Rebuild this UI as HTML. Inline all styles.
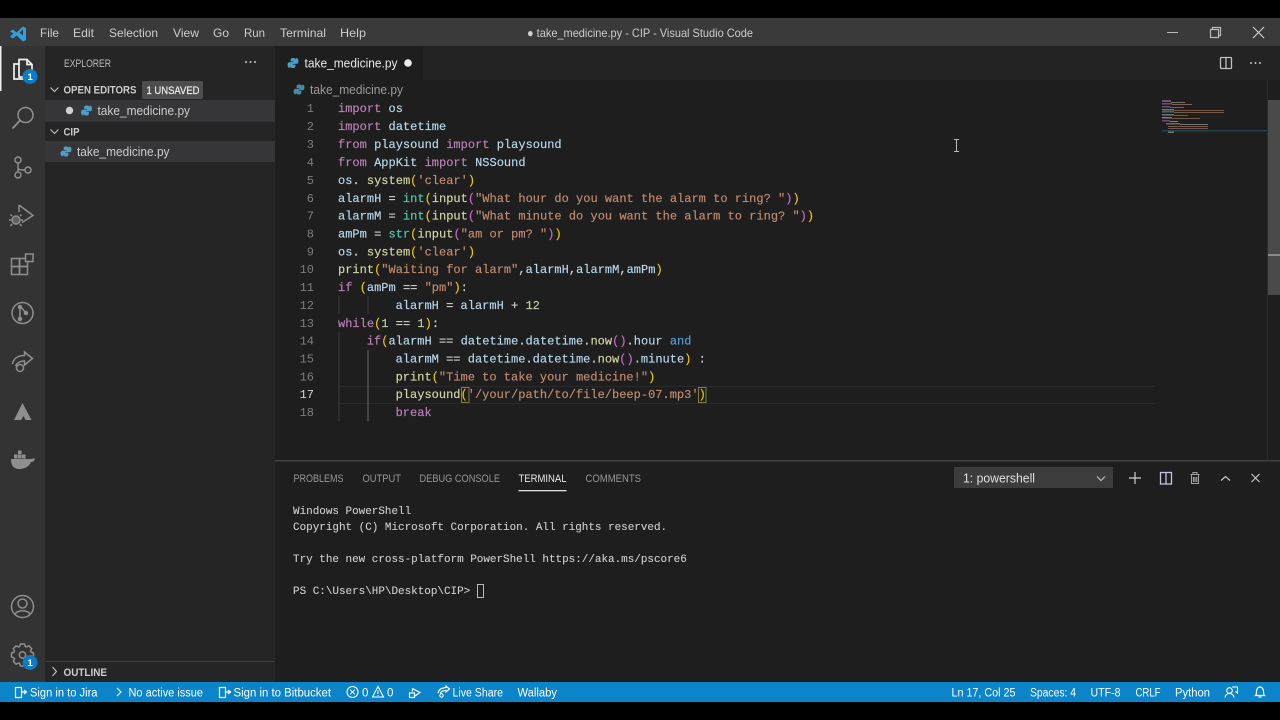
<!DOCTYPE html>
<html><head><meta charset="utf-8"><title>take_medicine.py - CIP - Visual Studio Code</title>
<style>
html,body{margin:0;padding:0;background:#000;width:1280px;height:720px;overflow:hidden}
svg{display:block;filter:blur(.3px)}
text{font-family:"Liberation Sans",sans-serif;font-size:12px;white-space:pre}
.c{font-family:"Liberation Mono",monospace;font-size:12px;letter-spacing:.012px;stroke-width:.18px}
.t{font-family:"Liberation Mono",monospace;font-size:10.94px;fill:#cccccc;stroke:#cccccc;stroke-width:.12px}
.n{font-family:"Liberation Mono",monospace;font-size:12px;fill:#7d7d7d;text-anchor:end}
.k{fill:#bb80b6;stroke:#bb80b6}.v{fill:#b4d6ea;stroke:#b4d6ea}.f{fill:#d3d3a6;stroke:#d3d3a6}.g{fill:#4ec9b0;stroke:#4ec9b0}.s{fill:#c08a6e;stroke:#c08a6e}.m{fill:#b5cea8;stroke:#b5cea8}.w{fill:#d0d0d0;stroke:#d0d0d0}.y{fill:#e8c610;stroke:#e8c610}.p{fill:#c96ac6;stroke:#c96ac6}.b{fill:#3b9ee0}.a{fill:#569cd6;stroke:#569cd6}
.i{fill:none;stroke:#8f8f8f;stroke-width:1.5}
.s1{fill:#fff;font-size:11.5px}
</style></head><body>
<svg width="1280" height="720" viewBox="0 0 1280 720" xmlns="http://www.w3.org/2000/svg">
<rect width="1280" height="720" fill="#000"/>
<rect y="18" width="1280" height="28" fill="#3a3a3a"/>
<rect y="46" width="45" height="636" fill="#333333"/>
<rect x="45" y="46" width="230" height="636" fill="#252526"/>
<rect x="275" y="46" width="1005" height="636" fill="#1e1e1e"/>
<rect x="275" y="46" width="1005" height="34" fill="#232323"/>
<rect x="275" y="46" width="148" height="34" fill="#1e1e1e"/>
<rect x="275" y="460" width="1005" height="1.500" fill="#414141"/>
<rect y="682" width="1280" height="20" fill="#0c84c9"/>

<!-- title bar -->
<path d="M10 31.500l3-2 3.500 3 6.500-6 3 1.500v12l-3 1.500-6.500-6-3.500 3-3-2 3.500-3z" fill="#2f9fe0"/>
<path d="M19.500 32.500l3.500-3v6z" fill="#3a3a3a"/>
<g fill="#cccccc">
<text x="40" y="37" textLength="19" lengthAdjust="spacingAndGlyphs">File</text>
<text x="73" y="37" textLength="21" lengthAdjust="spacingAndGlyphs">Edit</text>
<text x="109" y="37" textLength="49" lengthAdjust="spacingAndGlyphs">Selection</text>
<text x="173" y="37" textLength="26" lengthAdjust="spacingAndGlyphs">View</text>
<text x="213" y="37" textLength="16" lengthAdjust="spacingAndGlyphs">Go</text>
<text x="244" y="37" textLength="21" lengthAdjust="spacingAndGlyphs">Run</text>
<text x="280" y="37" textLength="46" lengthAdjust="spacingAndGlyphs">Terminal</text>
<text x="340" y="37" textLength="26" lengthAdjust="spacingAndGlyphs">Help</text>
<text x="527" y="37" textLength="226" lengthAdjust="spacingAndGlyphs">● take_medicine.py - CIP - Visual Studio Code</text>
</g>
<path d="M1167 32.500h11" stroke="#bbb" stroke-width="1" fill="none"/>
<path d="M1210.500 29.500h8v8h-8zM1212.500 29.500v-2h8v8h-2" stroke="#bbb" stroke-width="1.200" fill="none"/>
<path d="M1253 27l11 11M1264 27l-11 11" stroke="#ccc" stroke-width="1.200" fill="none"/>

<!-- activity bar -->
<rect x="0" y="46" width="1.500" height="45" fill="#eee"/>
<g fill="none" stroke="#f0f0f0" stroke-width="1.700">
<path d="M19 59.500h8l5 5v12.500H19z"/><path d="M19 64h-5v15h11v-2"/><path d="M27 59.500v5h5"/>
</g>
<circle cx="30" cy="76.500" r="7.500" fill="#0e7cc4"/>
<text x="27.500" y="80" style="font-size:9.500px;font-weight:bold" fill="#fff">1</text>
<g class="i">
<circle cx="25.500" cy="115" r="7.500"/><path d="M20 120.500l-7.500 8" stroke-width="1.900"/>
<circle cx="18" cy="160" r="3"/><circle cx="28" cy="170" r="3"/><circle cx="18" cy="175" r="3"/>
<path d="M18 163v9M18 168q0 2 7 2"/>
<path d="M19 205l14 10.500-11 7"/><path d="M19 205v7"/>
<circle cx="16" cy="220" r="4" fill="#8f8f8f" fill-opacity=".5"/><path d="M12 216l-1.500-1.500M20 216l1.500-1.500M11 220H9M21 220h2M12 224l-1.500 2M20 224l1.500 2"/>
<rect x="11.500" y="258.500" width="8" height="8"/><rect x="19.500" y="258.500" width="8" height="8"/><rect x="11.500" y="266.500" width="8" height="8"/><rect x="19.500" y="266.500" width="8" height="8"/><rect x="25.500" y="254" width="7.500" height="7.500" fill="#333"/>
<circle cx="22.500" cy="313" r="10.500"/><path d="M20 306v14M20 306l6 7"/><circle cx="20" cy="307" r="1.500" fill="#8f8f8f"/><circle cx="20" cy="319" r="1.500" fill="#8f8f8f"/><circle cx="26" cy="313" r="1.500" fill="#8f8f8f"/>
<circle cx="20" cy="368" r="3.500"/><path d="M12.500 364c1-6 6-8.500 12-8.500v-3.500l8 6.500-8 6.500v-4c-4 0-7 1-9 5"/>
</g>
<path d="M22.500 403L14 420H21L23.500 416L25.500 420H31.500Z" fill="#8f8f8f"/>
<path d="M11 459h21c1-1 2-1 3 0-1 2-2 3-4 3-2 5-7 7-12 7-5 0-8-3-8-10z" fill="#8f8f8f"/>
<rect x="14" y="454.500" width="3.600" height="4" fill="#8f8f8f"/><rect x="18" y="454.500" width="3.600" height="4" fill="#8f8f8f"/><rect x="22" y="454.500" width="3.600" height="4" fill="#8f8f8f"/><rect x="18" y="450.500" width="3.600" height="3.600" fill="#8f8f8f"/>
<g class="i">
<circle cx="22.500" cy="606.500" r="11"/><circle cx="22.500" cy="603.500" r="4.500"/><path d="M15 614.500c1.500-5 13.500-5 15 0"/>
</g>
<g class="i" transform="translate(22.500 655)">
<circle r="3.200"/>
<path id="tooth" d="M-3-8.200L-2-11H2L3-8.200L3.680-7.920"/>
<use href="#tooth" transform="rotate(45)"/><use href="#tooth" transform="rotate(90)"/><use href="#tooth" transform="rotate(135)"/><use href="#tooth" transform="rotate(180)"/><use href="#tooth" transform="rotate(225)"/><use href="#tooth" transform="rotate(270)"/><use href="#tooth" transform="rotate(315)"/>
</g>
<circle cx="30" cy="662.500" r="7.500" fill="#0e7cc4"/>
<text x="27.500" y="666" style="font-size:9.500px;font-weight:bold" fill="#fff">1</text>

<!-- sidebar -->
<text x="64" y="67" style="font-size:11px" fill="#bbbbbb" textLength="47" lengthAdjust="spacingAndGlyphs">EXPLORER</text>
<g fill="#c4c4c4"><circle cx="246" cy="62" r="1"/><circle cx="250.500" cy="62" r="1"/><circle cx="255" cy="62" r="1"/></g>
<path d="M50.500 87.500l4 4 4-4" fill="none" stroke="#c4c4c4" stroke-width="1.100"/>
<text x="63.500" y="93.500" style="font-size:11px;font-weight:bold" fill="#cccccc" textLength="73" lengthAdjust="spacingAndGlyphs">OPEN EDITORS</text>
<rect x="142" y="81" width="61" height="18" rx="2" fill="#4d4d4d"/>
<text x="146.500" y="94" style="font-size:11px" fill="#eeeeee" stroke="#eeeeee" stroke-width=".2" textLength="53" lengthAdjust="spacingAndGlyphs">1 UNSAVED</text>
<rect x="45" y="100" width="230" height="21" fill="#363639"/>
<circle cx="69.500" cy="110.500" r="3.700" fill="#d0d0d0"/>
<g id="py" transform="translate(86.500 110.500) scale(.8 1) translate(-86.500 -110.500)"><path d="M86.500 105.500c-2.500 0-3 1-3 2.500v1h3.500v.7h-5c-1.500 0-2.300 1-2.300 2.800s.8 2.800 2.200 2.800h1.100v-1.700c0-1.300 1-2.200 2.300-2.200h3c1 0 1.900-.9 1.900-2v-1.400c0-1.600-1.300-2.500-3.700-2.500z" fill="#4f9ec4"/><path d="M86.500 115.500c2.500 0 3-1 3-2.500v-1H86v-.7h5c1.500 0 2.300-1 2.300-2.800s-.8-2.800-2.200-2.800H90v1.700c0 1.300-1 2.200-2.300 2.200h-3c-1 0-1.900.9-1.900 2v1.400c0 1.600 1.300 2.500 3.700 2.500z" fill="#4f9ec4"/></g>
<text x="97.500" y="115" fill="#cccccc" style="font-size:13px" textLength="92.500" lengthAdjust="spacingAndGlyphs">take_medicine.py</text>
<rect x="45" y="120.500" width="230" height="1" fill="#3c3c3c"/>
<path d="M50.500 129.500l4 4 4-4" fill="none" stroke="#c4c4c4" stroke-width="1.100"/>
<text x="63.500" y="135.500" style="font-size:11px;font-weight:bold" fill="#cccccc" textLength="16" lengthAdjust="spacingAndGlyphs">CIP</text>
<rect x="45" y="141" width="230" height="21" fill="#363639"/>
<use href="#py" x="-20.500" y="41"/>
<text x="77" y="156" fill="#cccccc" style="font-size:13px" textLength="92.500" lengthAdjust="spacingAndGlyphs">take_medicine.py</text>
<rect x="45" y="661" width="230" height="1" fill="#3f3f3f"/>
<path d="M52.500 667l4 4.500-4 4.500" fill="none" stroke="#c4c4c4" stroke-width="1.100"/>
<text x="63.500" y="676" style="font-size:11px;font-weight:bold" fill="#cccccc" textLength="43.500" lengthAdjust="spacingAndGlyphs">OUTLINE</text>

<!-- tab -->
<use href="#py" x="206.500" y="-47.500"/>
<text x="304.500" y="67.500" fill="#e8e8e8" style="font-size:13px" textLength="93" lengthAdjust="spacingAndGlyphs">take_medicine.py</text>
<circle cx="408" cy="63" r="3.800" fill="#eeeeee"/>
<rect x="1220.500" y="57.500" width="11" height="11" rx="1" fill="none" stroke="#c0c0c0" stroke-width="1.300"/>
<path d="M1226 57.500v11" stroke="#c0c0c0" stroke-width="1.300"/>
<g fill="#c4c4c4"><circle cx="1251" cy="63" r="1"/><circle cx="1255.500" cy="63" r="1"/><circle cx="1260" cy="63" r="1"/></g>
<use href="#py" x="212.500" y="-21" opacity=".85"/>
<text x="310" y="94" fill="#9a9a9a" style="font-size:12.500px" textLength="93" lengthAdjust="spacingAndGlyphs">take_medicine.py</text>

<!-- current line + guides -->
<path d="M338 386.500H1155M338 403.500H1155" stroke="#2a2a2a" stroke-width="1"/>
<path d="M339 296v18M368 296v18M339 332v89" stroke="#3c3c3c" stroke-width="1"/>
<path d="M368 350v71" stroke="#6a6a6a" stroke-width="1"/>
<rect x="461.500" y="387.500" width="7.500" height="15" fill="#1e1e1e" stroke="#808040" stroke-width="1"/>
<rect x="698.500" y="387.500" width="7.500" height="15" fill="#1e1e1e" stroke="#808040" stroke-width="1"/>

<!-- line numbers -->
<text class="n" x="314" y="112">1</text>
<text class="n" x="314" y="130">2</text>
<text class="n" x="314" y="148">3</text>
<text class="n" x="314" y="166">4</text>
<text class="n" x="314" y="184">5</text>
<text class="n" x="314" y="202">6</text>
<text class="n" x="314" y="219.500">7</text>
<text class="n" x="314" y="237.500">8</text>
<text class="n" x="314" y="255.500">9</text>
<text class="n" x="314" y="273">10</text>
<text class="n" x="314" y="291">11</text>
<text class="n" x="314" y="309">12</text>
<text class="n" x="314" y="327">13</text>
<text class="n" x="314" y="344.500">14</text>
<text class="n" x="314" y="362.500">15</text>
<text class="n" x="314" y="380.500">16</text>
<text class="n" x="314" y="398" style="fill:#d0d0d0">17</text>
<text class="n" x="314" y="416">18</text>

<!-- code -->
<g>
<text class="c" x="338" y="112"><tspan class="k">import</tspan><tspan class="w"> </tspan><tspan class="v">os</tspan></text>
<text class="c" x="338" y="130"><tspan class="k">import</tspan><tspan class="w"> </tspan><tspan class="v">datetime</tspan></text>
<text class="c" x="338" y="148"><tspan class="k">from</tspan><tspan class="w"> </tspan><tspan class="v">playsound</tspan><tspan class="w"> </tspan><tspan class="k">import</tspan><tspan class="w"> </tspan><tspan class="v">playsound</tspan></text>
<text class="c" x="338" y="166"><tspan class="k">from</tspan><tspan class="w"> </tspan><tspan class="v">AppKit</tspan><tspan class="w"> </tspan><tspan class="k">import</tspan><tspan class="w"> </tspan><tspan class="v">NSSound</tspan></text>
<text class="c" x="338" y="184"><tspan class="v">os</tspan><tspan class="w">. </tspan><tspan class="f">system</tspan><tspan class="y">(</tspan><tspan class="s">'clear'</tspan><tspan class="y">)</tspan></text>
<text class="c" x="338" y="202"><tspan class="v">alarmH</tspan><tspan class="w"> = </tspan><tspan class="g">int</tspan><tspan class="y">(</tspan><tspan class="f">input</tspan><tspan class="p">(</tspan><tspan class="s">"What hour do you want the alarm to ring? "</tspan><tspan class="p">)</tspan><tspan class="y">)</tspan></text>
<text class="c" x="338" y="219.500"><tspan class="v">alarmM</tspan><tspan class="w"> = </tspan><tspan class="g">int</tspan><tspan class="y">(</tspan><tspan class="f">input</tspan><tspan class="p">(</tspan><tspan class="s">"What minute do you want the alarm to ring? "</tspan><tspan class="p">)</tspan><tspan class="y">)</tspan></text>
<text class="c" x="338" y="237.500"><tspan class="v">amPm</tspan><tspan class="w"> = </tspan><tspan class="g">str</tspan><tspan class="y">(</tspan><tspan class="f">input</tspan><tspan class="p">(</tspan><tspan class="s">"am or pm? "</tspan><tspan class="p">)</tspan><tspan class="y">)</tspan></text>
<text class="c" x="338" y="255.500"><tspan class="v">os</tspan><tspan class="w">. </tspan><tspan class="f">system</tspan><tspan class="y">(</tspan><tspan class="s">'clear'</tspan><tspan class="y">)</tspan></text>
<text class="c" x="338" y="273"><tspan class="f">print</tspan><tspan class="y">(</tspan><tspan class="s">"Waiting for alarm"</tspan><tspan class="w">,</tspan><tspan class="v">alarmH</tspan><tspan class="w">,</tspan><tspan class="v">alarmM</tspan><tspan class="w">,</tspan><tspan class="v">amPm</tspan><tspan class="y">)</tspan></text>
<text class="c" x="338" y="291"><tspan class="k">if</tspan><tspan class="w"> </tspan><tspan class="y">(</tspan><tspan class="v">amPm</tspan><tspan class="w"> == </tspan><tspan class="s">"pm"</tspan><tspan class="y">)</tspan><tspan class="w">:</tspan></text>
<text class="c" x="395.600" y="309"><tspan class="v">alarmH</tspan><tspan class="w"> = </tspan><tspan class="v">alarmH</tspan><tspan class="w"> + </tspan><tspan class="m">12</tspan></text>
<text class="c" x="338" y="327"><tspan class="k">while</tspan><tspan class="y">(</tspan><tspan class="m">1</tspan><tspan class="w"> == </tspan><tspan class="m">1</tspan><tspan class="y">)</tspan><tspan class="w">:</tspan></text>
<text class="c" x="366.800" y="344.500"><tspan class="k">if</tspan><tspan class="y">(</tspan><tspan class="v">alarmH</tspan><tspan class="w"> == </tspan><tspan class="v">datetime</tspan><tspan class="w">.</tspan><tspan class="v">datetime</tspan><tspan class="w">.</tspan><tspan class="f">now</tspan><tspan class="p">()</tspan><tspan class="w">.</tspan><tspan class="v">hour</tspan><tspan class="w"> </tspan><tspan class="a">and</tspan></text>
<text class="c" x="395.600" y="362.500"><tspan class="v">alarmM</tspan><tspan class="w"> == </tspan><tspan class="v">datetime</tspan><tspan class="w">.</tspan><tspan class="v">datetime</tspan><tspan class="w">.</tspan><tspan class="f">now</tspan><tspan class="p">()</tspan><tspan class="w">.</tspan><tspan class="v">minute</tspan><tspan class="y">)</tspan><tspan class="w"> :</tspan></text>
<text class="c" x="395.600" y="380.500"><tspan class="f">print</tspan><tspan class="y">(</tspan><tspan class="s">"Time to take your medicine!"</tspan><tspan class="y">)</tspan></text>
<text class="c" x="395.600" y="398"><tspan class="f">playsound</tspan><tspan class="y">(</tspan><tspan class="s">'/your/path/to/file/beep-07.mp3'</tspan><tspan class="y">)</tspan></text>
<text class="c" x="395.600" y="416"><tspan class="k">break</tspan></text>
</g>

<!-- I-beam -->
<path d="M954 139.500h5M954 151.500h5M956.500 140v11" stroke="#bbb" stroke-width="1" fill="none"/>

<!-- minimap -->
<g opacity=".6">
<rect x="1162" y="100" width="9" height="2" fill="#b070b0"/><rect x="1171" y="102" width="14" height="1" fill="#aaa"/>
<rect x="1162" y="103" width="10" height="1.500" fill="#9c6fa0"/><rect x="1172" y="104" width="20" height="1" fill="#c08a6e"/>
<rect x="1162" y="106" width="8" height="1.500" fill="#9c6fa0"/><rect x="1170" y="107" width="14" height="1" fill="#999"/>
<rect x="1162" y="109" width="12" height="1.500" fill="#aaa"/><rect x="1174" y="110" width="50" height="1" fill="#b08060"/>
<rect x="1162" y="111" width="12" height="1.500" fill="#4e9e88"/><rect x="1174" y="112" width="50" height="1" fill="#b08060"/>
<rect x="1162" y="114" width="12" height="1.500" fill="#aaa"/><rect x="1174" y="115" width="14" height="1" fill="#b08060"/>
<rect x="1162" y="117" width="10" height="1.500" fill="#bbb"/><rect x="1172" y="118" width="28" height="1" fill="#b08060"/>
<rect x="1162" y="120" width="8" height="1.500" fill="#9c6fa0"/><rect x="1170" y="121" width="8" height="1" fill="#ccc"/>
<rect x="1166" y="123" width="14" height="1.500" fill="#999"/><rect x="1180" y="124" width="28" height="1" fill="#aaa"/>
<rect x="1168" y="126" width="40" height="1" fill="#b08060"/>
<rect x="1168" y="128" width="40" height="1" fill="#a08078"/>
<rect x="1168" y="130" width="6" height="3" fill="#aaa"/>
</g>
<rect x="1162" y="130" width="105" height="1.500" fill="#26404f"/>
<!-- scrollbar -->
<rect x="1267" y="100" width="13" height="195" fill="#4a4a4a"/>
<rect x="1267" y="254" width="13" height="2" fill="#8a8a8a"/>
<rect x="1267" y="80" width="1" height="380" fill="#2b2b2b"/>

<!-- panel tabs -->
<g fill="#969696">
<text x="293.500" y="482" style="font-size:11px" textLength="50" lengthAdjust="spacingAndGlyphs">PROBLEMS</text>
<text x="362.500" y="482" style="font-size:11px" textLength="38.500" lengthAdjust="spacingAndGlyphs">OUTPUT</text>
<text x="419.500" y="482" style="font-size:11px" textLength="80.500" lengthAdjust="spacingAndGlyphs">DEBUG CONSOLE</text>
<text x="518.500" y="482" style="font-size:11px" fill="#e7e7e7" textLength="48" lengthAdjust="spacingAndGlyphs">TERMINAL</text>
<text x="585.500" y="482" style="font-size:11px" textLength="55.500" lengthAdjust="spacingAndGlyphs">COMMENTS</text>
</g>
<rect x="518.500" y="490" width="48" height="1.300" fill="#e0e0e0"/>
<rect x="954" y="467" width="159" height="21" fill="#3c3c3c"/>
<text x="963" y="482.500" fill="#e0e0e0" style="font-size:12.500px" textLength="72" lengthAdjust="spacingAndGlyphs">1: powershell</text>
<path d="M1097 476.500l4 4 4-4" fill="none" stroke="#bbb" stroke-width="1.200"/>
<path d="M1135 472v12M1129 478h12" stroke="#d0d0d0" stroke-width="1.200"/>
<rect x="1160.500" y="472.500" width="11" height="11.500" fill="none" stroke="#c8c0e0" stroke-width="1.300"/><path d="M1166 472.500v11.500" stroke="#c8c0e0" stroke-width="1.300"/>
<path d="M1190.500 474.500h9M1193 474v-1.500h4v1.500M1191.500 475v8.500h7V475M1193.500 477v5M1195 477v5M1196.700 477v5" fill="none" stroke="#a0a0a0" stroke-width="1.100"/>
<path d="M1221 480.500l4.500-4 4.500 4" fill="none" stroke="#c8c8c8" stroke-width="1.200"/>
<path d="M1251.500 474l8 8M1259.500 474l-8 8" fill="none" stroke="#c8c8c8" stroke-width="1.200"/>

<!-- terminal -->
<text class="t" x="293" y="514">Windows PowerShell</text>
<text class="t" x="293" y="530">Copyright (C) Microsoft Corporation. All rights reserved.</text>
<text class="t" x="293" y="562">Try the new cross-platform PowerShell https://aka.ms/pscore6</text>
<text class="t" x="293" y="594">PS C:\Users\HP\Desktop\CIP&gt;</text>
<rect x="477.500" y="584.500" width="6" height="13" fill="none" stroke="#bbb" stroke-width="1"/>

<!-- status bar -->
<g fill="#f0f0f0">
<path d="M15.500 687.500h6v10h-6zM21.500 692h5M24 690l2.500 2-2.500 2" fill="none" stroke="#fff" stroke-width="1.200"/>
<text class="s1" x="30" y="696.500" textLength="67.500" lengthAdjust="spacingAndGlyphs">Sign in to Jira</text>
<path d="M117 688l4 4-4 4" fill="none" stroke="#fff" stroke-width="1.100"/>
<text class="s1" x="128.500" y="696.500" textLength="74.500" lengthAdjust="spacingAndGlyphs">No active issue</text>
<path d="M219.500 687.500h6v10h-6zM225.500 692h5M228 690l2.500 2-2.500 2" fill="none" stroke="#fff" stroke-width="1.200"/>
<text class="s1" x="233.500" y="696.500" textLength="97.500" lengthAdjust="spacingAndGlyphs">Sign in to Bitbucket</text>
<circle cx="352.500" cy="692" r="5.500" fill="none" stroke="#fff" stroke-width="1.100"/><path d="M350.200 689.700l4.600 4.600M354.800 689.700l-4.600 4.600" stroke="#fff" stroke-width="1"/>
<text class="s1" x="362" y="696.500">0</text>
<path d="M378 686.500l5.500 10.500h-11z" fill="none" stroke="#fff" stroke-width="1.100"/><path d="M378 690.500v3.500M378 695v1" stroke="#fff" stroke-width="1"/>
<text class="s1" x="387" y="696.500">0</text>
<path d="M412.500 688.500l7.500 4-5 3.500" fill="none" stroke="#fff" stroke-width="1.200"/><rect x="409.500" y="693" width="5" height="4.500" fill="none" stroke="#fff" stroke-width="1.200"/><path d="M412.500 688.500v3" stroke="#fff" stroke-width="1.200"/>
<path d="M438 693c1-4 4-5 8-5.500v-1.500l3.500 3-3.500 3v-1.500c-3 0-5 1-6 3" fill="none" stroke="#fff" stroke-width="1.200"/><circle cx="441.500" cy="695.500" r="1.700" fill="none" stroke="#fff" stroke-width="1"/>
<text class="s1" x="452.500" y="696.500" textLength="50.500" lengthAdjust="spacingAndGlyphs">Live Share</text>
<text class="s1" x="517.500" y="696.500" textLength="39.500" lengthAdjust="spacingAndGlyphs">Wallaby</text>
<text class="s1" x="951.500" y="696.500" textLength="64" lengthAdjust="spacingAndGlyphs">Ln 17, Col 25</text>
<text class="s1" x="1030" y="696.500" textLength="46" lengthAdjust="spacingAndGlyphs">Spaces: 4</text>
<text class="s1" x="1090.500" y="696.500" textLength="30" lengthAdjust="spacingAndGlyphs">UTF-8</text>
<text class="s1" x="1135.500" y="696.500" textLength="25" lengthAdjust="spacingAndGlyphs">CRLF</text>
<text class="s1" x="1175" y="696.500" textLength="35" lengthAdjust="spacingAndGlyphs">Python</text>
<circle cx="1229.500" cy="690.500" r="2.800" fill="none" stroke="#fff" stroke-width="1.100"/><path d="M1225 697.500c.5-3 2-4 4.500-4s4 1 4.500 4M1232 687h5.500v6l-2-1.500" fill="none" stroke="#fff" stroke-width="1.100"/>
<path d="M1255.500 695.500c1-1 1-2.500 1-4 0-2.500 1.500-4.500 3.500-4.500s3.500 2 3.500 4.500c0 1.500 0 3 1 4zM1258.500 697h3" fill="none" stroke="#fff" stroke-width="1.200"/>
</g>
</svg>
</body></html>
